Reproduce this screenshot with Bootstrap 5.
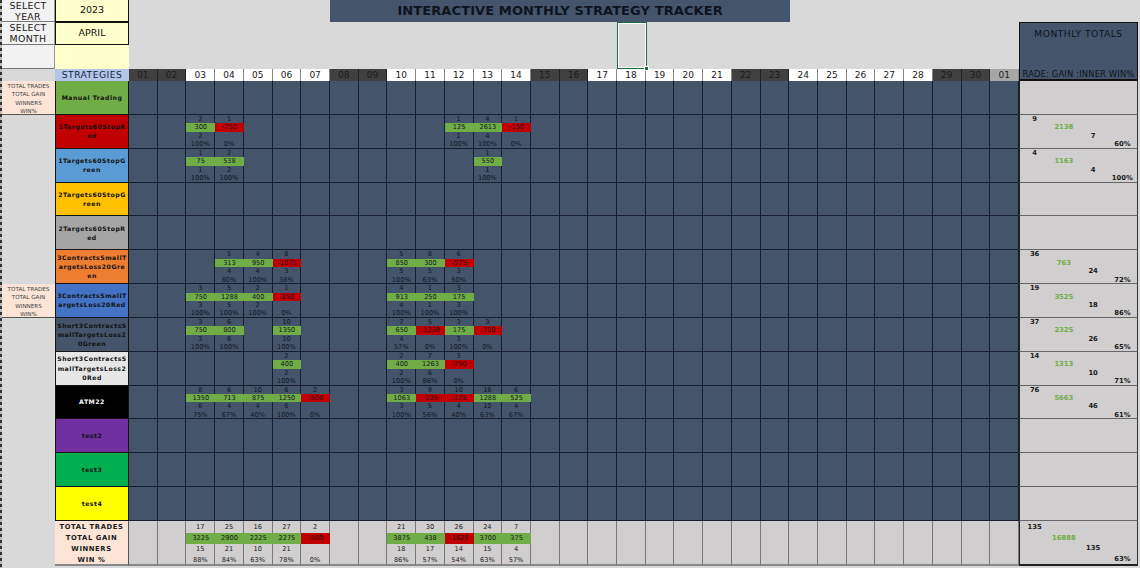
<!DOCTYPE html>
<html lang="en">
<head>
    <meta charset="UTF-8">
    <meta name="viewport" content="width=device-width, initial-scale=1.0">
    <title>Interactive Monthly Strategy Tracker</title>
    <link rel="stylesheet" href="https://cdn.jsdelivr.net/npm/bootstrap@5.3.0/dist/css/bootstrap.min.css">
    <style>
        :root {
            --navy: #44546a;
            --line: #151d2e;
            --sheet: #d9d9d9;
            --cols: 53px 74px repeat(31, 1fr) 119px;
        }

        html, body {
            margin: 0;
            height: 568px;
            overflow: hidden;
            background: var(--sheet);
        }

        .tracker {
            width: 1140px;
            height: 568px;
            padding: 0 2px 2px 2px;
            font-family: "DejaVu Sans", sans-serif;
            color: #1a1a1a;
            background: repeating-linear-gradient(#333 0 3px, #bbb 3px 6px) left top / 2px 100% no-repeat, var(--sheet);
        }

        .top-band {
            display: grid;
            grid-template-columns: var(--cols);
            grid-template-rows: 22px 23px 24px;
        }

        .sheet-grid {
            display: grid;
            grid-template-columns: var(--cols);
            grid-template-rows: 12px repeat(13, 33.85px) 45px;
        }

        /* top left selectors */
        .sel-label {
            grid-column: 1;
            background: #f2f2f2;
            border-bottom: 1px solid #777;
            border-right: 1px solid #999;
            font-size: 9.4px;
            line-height: 11px;
            text-align: center;
            letter-spacing: .3px;
        }

        .sel-value {
            grid-column: 2;
            background: #ffffcc;
            border: 1px solid #111;
            border-width: 0 1px 1px 1px;
            font-size: 9.5px;
            color: #111;
        }

        .sel-month { border-top-width: 1px; }
        .sel-blank { background: #ffffcc; border: 0; }

        .title-box {
            grid-column: 10 / 26;
            grid-row: 1;
            margin-right: -1px;
            background: var(--navy);
            color: #0d1420;
            font-size: 13px;
            font-weight: 700;
            letter-spacing: .1px;
        }

        .cell-selected {
            grid-column: 20;
            grid-row: 2 / span 2;
            margin-right: -1px;
            border: 1px solid #1e6b41;
            box-shadow: inset 0 0 0 1px #fff;
            position: relative;
        }

        .cell-selected::after {
            content: "";
            position: absolute;
            right: -3px;
            bottom: -3px;
            width: 5px;
            height: 5px;
            background: #1e6b41;
            border: 1px solid #fff;
        }

        .month-head {
            grid-column: 34;
            grid-row: 2 / span 2;
            background: var(--navy);
            border: 1px solid #111;
            border-width: 1px 1px 0 1px;
            color: #0d1420;
            font-size: 9.2px;
            letter-spacing: .45px;
            padding-top: 4px;
        }

        /* sheet cells */
        .gutter { background: var(--sheet); }

        .gutter-note {
            background: #fce4d6;
            border-bottom: 1px solid #555;
            color: #444;
            font-size: 5.6px;
            line-height: 8.4px;
            text-align: center;
            padding-top: 1px;
        }

        .strat-head {
            background: #b4c6e7;
            color: #17264a;
            font-size: 9.2px;
            font-weight: 500;
            line-height: 11px;
            letter-spacing: .45px;
        }

        .day-head {
            background: #fff;
            border-right: 1px solid #888;
            font-size: 9px;
            font-weight: 500;
            line-height: 12px;
            text-align: center;
        }

        .day-off { background: #404040; color: #1c1c1c; border-right-color: #222; }
        .day-next { background: #a6a6a6; color: #222; border-right-color: #888; }

        .strat-name {
            border: 1px solid #151515;
            border-width: 0 1px 1px 1px;
            font-size: 6.2px;
            font-weight: 700;
            line-height: 9.2px;
            letter-spacing: .5px;
            word-break: break-all;
            text-align: center;
            padding: 0 1px;
            color: #111;
        }

        .day-cell {
            background: var(--navy);
            border-right: 1px solid var(--line);
            border-bottom: 1px solid var(--line);
            font-size: 6.6px;
            line-height: 8.45px;
            text-align: center;
            color: #10161f;
        }

        .gain-ok, .gain-bad { display: block; height: 8.45px; margin-right: -1px; }
        .gain-ok { background: #70ad47; }
        .gain-bad { background: #c00000; color: #2b0606; }

        .total-name {
            background: #fce4d6;
            border-right: 1px solid #555;
            border-bottom: 2px solid #888;
            font-size: 6.8px;
            font-weight: 700;
            line-height: 11px;
            letter-spacing: .6px;
            text-align: center;
            padding-top: 1px;
        }

        .total-cell {
            background: #d0cece;
            border-right: 1px solid #777;
            border-bottom: 2px solid #888;
            font-size: 6.6px;
            line-height: 11px;
            text-align: center;
            padding-top: 1px;
        }

        .total-cell .gain-ok, .total-cell .gain-bad { height: 11px; }

        .sum-head {
            background: var(--navy);
            border: 1px solid #111;
            border-width: 0 1px 2px 1px;
            color: #0d1420;
            font-size: 8.4px;
            letter-spacing: .15px;
            line-height: 11px;
            white-space: nowrap;
            overflow: hidden;
        }

        .sum-cell {
            display: grid;
            grid-template-columns: repeat(4, 1fr);
            grid-template-rows: repeat(4, 8.45px);
            background: #d0cece;
            border-left: 1px solid #222;
            border-right: 1px solid #333;
            border-bottom: 1px solid #666;
            font-size: 6.8px;
            font-weight: 700;
            line-height: 8.45px;
            text-align: center;
        }

        .sum-total {
            grid-template-rows: repeat(4, 10.7px);
            line-height: 10.7px;
            padding-top: 1px;
            border-bottom: 2px solid #222;
        }

        .sum-gain { grid-column: 2; grid-row: 2; color: #70ad47; }
        .sum-win { grid-column: 3; grid-row: 3; }
        .sum-pct { grid-column: 4; grid-row: 4; }
    </style>
</head>
<body>
    <div class="tracker">
        <div class="top-band">
            <div class="sel-label d-flex align-items-center justify-content-center">SELECT<br>YEAR</div>
            <div class="sel-value d-flex align-items-center justify-content-center">2023</div>
            <div class="sel-label d-flex align-items-center justify-content-center">SELECT<br>MONTH</div>
            <div class="sel-value sel-month d-flex align-items-center justify-content-center">APRIL</div>
            <div class="sel-label"></div>
            <div class="sel-value sel-blank"></div>
            <div class="title-box d-flex align-items-center justify-content-center">INTERACTIVE MONTHLY STRATEGY TRACKER</div>
            <div class="cell-selected"></div>
            <div class="month-head text-center">MONTHLY TOTALS</div>
        </div>
        <div class="sheet-grid" id="sheet"></div>
    </div>

    <script src="https://cdn.jsdelivr.net/npm/bootstrap@5.3.0/dist/js/bootstrap.bundle.min.js"></script>
    <script>
        // day: [trades, gain, winners, win%]
        const rows = [
            { name: "Manual Trading", bg: "#70ad47", note: true, days: {} },
            { name: "1Targets60StopRed", bg: "#c00000", sum: [9, 2138, 7, "60%"], days: {
                3: [2, 300, 2, "100%"], 4: [1, -750, "", "0%"], 12: [1, 125, 1, "100%"], 13: [4, 2613, 4, "100%"], 14: [1, -150, "", "0%"] } },
            { name: "1Targets60StopGreen", bg: "#5b9bd5", sum: [4, 1163, 4, "100%"], days: {
                3: [1, 75, 1, "100%"], 4: [2, 538, 2, "100%"], 13: [1, 550, 1, "100%"] } },
            { name: "2Targets60StopGreen", bg: "#ffc000", days: {} },
            { name: "2Targets60StopRed", bg: "#a5a5a5", days: {} },
            { name: "3ContractsSmallTargetsLoss20Green", bg: "#ed7d31", sum: [36, 763, 24, "72%"], days: {
                4: [5, 313, 4, "80%"], 5: [4, 950, 4, "100%"], 6: [8, -1075, 3, "38%"], 10: [5, 850, 5, "100%"], 11: [8, 300, 5, "63%"], 12: [6, -575, 3, "50%"] } },
            { name: "3ContractsSmallTargetsLoss20Red", bg: "#4472c4", note: true, sum: [19, 3525, 18, "86%"], days: {
                3: [3, 750, 3, "100%"], 4: [5, 1288, 5, "100%"], 5: [2, 400, 2, "100%"], 6: [1, -250, "", "0%"], 10: [4, 913, 4, "100%"], 11: [1, 250, 1, "100%"], 12: [3, 175, 3, "100%"] } },
            { name: "Short3ContractsSmallTargetsLoss20Green", bg: "#44546a", sum: [37, 2325, 26, "65%"], days: {
                3: [3, 750, 3, "100%"], 4: [6, 800, 6, "100%"], 6: [10, 1350, 10, "100%"], 10: [7, 650, 4, "57%"], 11: [5, -1250, "", "0%"], 12: [3, 175, 3, "100%"], 13: [3, -750, "", "0%"] } },
            { name: "Short3ContractsSmallTargetsLoss20Red", bg: "#e7e6e6", sum: [14, 1313, 10, "71%"], days: {
                6: [2, 400, 2, "100%"], 10: [2, 400, 2, "100%"], 11: [7, 1263, 6, "86%"], 12: [3, -750, "", "0%"] } },
            { name: "ATM22", bg: "#000", color: "#fff", sum: [76, 5663, 46, "61%"], days: {
                3: [8, 1350, 6, "75%"], 4: [6, 713, 4, "67%"], 5: [10, 875, 4, "40%"], 6: [6, 1250, 6, "100%"], 7: [2, -500, "", "0%"], 10: [3, 1063, 3, "100%"], 11: [9, -125, 5, "56%"], 12: [10, -175, 4, "40%"], 13: [16, 1288, 10, "63%"], 14: [6, 525, 4, "67%"] } },
            { name: "test2", bg: "#7030a0", days: {} },
            { name: "test3", bg: "#00b050", days: {} },
            { name: "test4", bg: "#ffff00", days: {} }
        ];

        const totals = {
            3: [17, 3225, 15, "88%"], 4: [25, 2900, 21, "84%"], 5: [16, 2225, 10, "63%"], 6: [27, 2275, 21, "78%"], 7: [2, -500, "", "0%"],
            10: [21, 3875, 18, "86%"], 11: [30, 438, 17, "57%"], 12: [26, -1625, 14, "54%"], 13: [24, 3700, 15, "63%"], 14: [7, 375, 4, "57%"]
        };

        const offDays = [1, 2, 8, 9, 15, 16, 22, 23, 29, 30];
        const pad = n => String(n).padStart(2, "0");

        function dayInner(d) {
            if (!d) return "";
            const cls = d[1] < 0 ? "gain-bad" : "gain-ok";
            return `${d[0]}<span class="${cls}">${d[1]}</span>${d[2] === "" ? "&nbsp;" : d[2]}<br>${d[3]}`;
        }

        function sumInner(s) {
            if (!s) return "";
            return `<span>${s[0]}</span><span class="sum-gain">${s[1]}</span><span class="sum-win">${s[2]}</span><span class="sum-pct">${s[3]}</span>`;
        }

        let html = `<div class="gutter"></div><div class="strat-head text-center">STRATEGIES</div>`;
        for (let i = 1; i <= 31; i++) {
            const cls = i === 31 ? "day-next" : offDays.includes(i) ? "day-off" : "";
            html += `<div class="day-head ${cls}">${i === 31 ? "01" : pad(i)}</div>`;
        }
        html += `<div class="sum-head px-0 text-center">RADE: GAIN :INNER WIN%</div>`;

        rows.forEach(r => {
            html += r.note
                ? `<div class="gutter-note">TOTAL TRADES<br>TOTAL GAIN<br>WINNERS<br>WIN%</div>`
                : `<div class="gutter"></div>`;
            html += `<div class="strat-name d-flex align-items-center justify-content-center" style="background:${r.bg}${r.color ? ";color:" + r.color : ""}"><span>${r.name}</span></div>`;
            for (let i = 1; i <= 31; i++) html += `<div class="day-cell">${dayInner(r.days[i])}</div>`;
            html += `<div class="sum-cell">${sumInner(r.sum)}</div>`;
        });

        html += `<div class="gutter"></div><div class="total-name">TOTAL TRADES<br>TOTAL GAIN<br>WINNERS<br>WIN %</div>`;
        for (let i = 1; i <= 31; i++) html += `<div class="total-cell">${dayInner(totals[i])}</div>`;
        html += `<div class="sum-cell sum-total">${sumInner([135, 16888, 135, "63%"])}</div>`;

        document.getElementById("sheet").innerHTML = html;
    </script>
</body>
</html>
